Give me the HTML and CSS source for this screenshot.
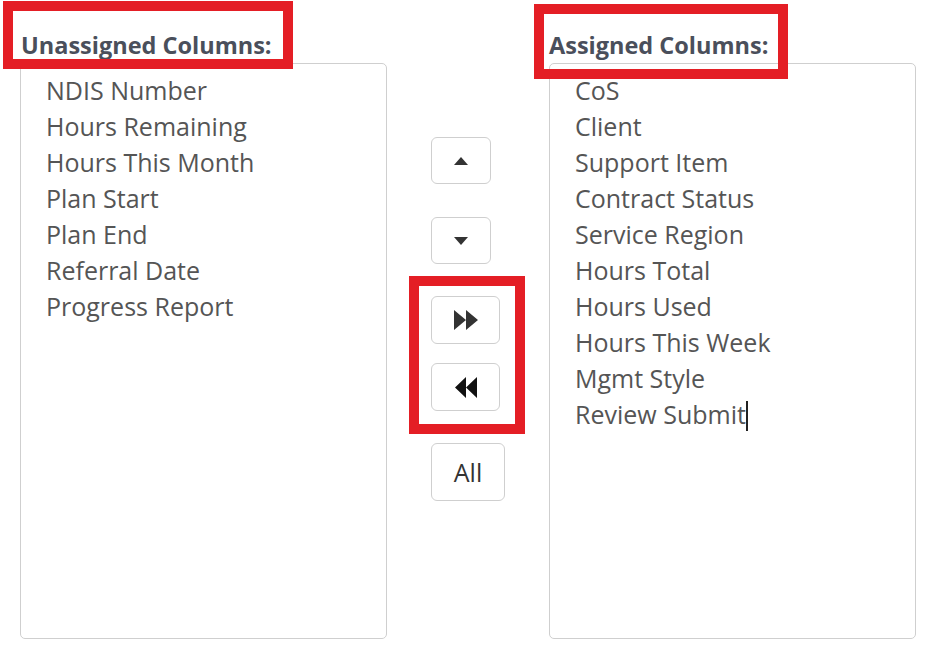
FILE: index.html
```html
<!DOCTYPE html>
<html lang="en">
<head>
    <meta charset="UTF-8">
    <title>Column Chooser</title>
    <link rel="stylesheet" href="styles.css">
</head>
<body>
    <div class="chooser">
        <div class="column-panel">
            <h2 class="panel-title">Unassigned Columns:</h2>
            <ul class="column-list">
                <li>NDIS Number</li>
                <li>Hours Remaining</li>
                <li>Hours This Month</li>
                <li>Plan Start</li>
                <li>Plan End</li>
                <li>Referral Date</li>
                <li>Progress Report</li>
            </ul>
        </div>

        <div class="actions">
            <button class="btn btn-up" title="Move up">
                <svg width="14" height="8" viewBox="0 0 14 8"><path d="M0 8 L7 0 L14 8 Z" fill="#333"/></svg>
            </button>
            <button class="btn btn-down" title="Move down">
                <svg width="14" height="8" viewBox="0 0 14 8"><path d="M0 0 L14 0 L7 8 Z" fill="#333"/></svg>
            </button>
            <button class="btn btn-move btn-assign" title="Assign">
                <svg width="24" height="20" viewBox="0 0 24 20"><path d="M0 0 L12 10 L0 20 Z M12 0 L24 10 L12 20 Z" fill="#333"/></svg>
            </button>
            <button class="btn btn-move btn-unassign" title="Unassign">
                <svg width="22" height="21" viewBox="0 0 22 21"><path d="M11 0 L0 10.5 L11 21 Z M22 0 L11 10.5 L22 21 Z" fill="#111"/></svg>
            </button>
            <button class="btn btn-all">All</button>
        </div>

        <div class="column-panel">
            <h2 class="panel-title assigned">Assigned Columns:</h2>
            <ul class="column-list">
                <li>CoS</li>
                <li>Client</li>
                <li>Support Item</li>
                <li>Contract Status</li>
                <li>Service Region</li>
                <li>Hours Total</li>
                <li>Hours Used</li>
                <li>Hours This Week</li>
                <li>Mgmt Style</li>
                <li>Review Submit<span class="cursor"></span></li>
            </ul>
        </div>
    </div>

    <!-- annotation boxes -->
    <div class="mark mark-left"></div>
    <div class="mark mark-right"></div>
    <div class="mark mark-middle"></div>
</body>
</html>
```

FILE: styles.css
```css
body {
    margin: 0;
    font-family: "Open Sans", "Noto Sans", sans-serif;
    background: #fff;
    position: relative;
}

.chooser {
    display: flex;
    padding: 30px 0 0 20px;
}

.column-panel {
    width: 367px;
}

.panel-title {
    margin: 0 0 3px 1px;
    font-size: 23.5px;
    line-height: 30px;
    font-weight: 700;
    color: #4a4f5b;
}

.panel-title.assigned {
    margin-left: 0;
}

.column-list {
    list-style: none;
    margin: 0;
    padding: 8px 0 0 25px;
    height: 566px;
    border: 1px solid #cfcfcf;
    border-radius: 5px;
    font-size: 25px;
    line-height: 36px;
    color: #555;
}

.cursor {
    display: inline-block;
    width: 2px;
    height: 30px;
    background: #222;
    vertical-align: -7px;
}

.actions {
    width: 162px;
    padding: 107px 0 0 44px;
    box-sizing: border-box;
    display: flex;
    flex-direction: column;
    align-items: flex-start;
}

.btn {
    display: flex;
    align-items: center;
    justify-content: center;
    background: #fff;
    border: 1px solid #cfcfcf;
    border-radius: 6px;
    padding: 0;
    font-family: inherit;
    cursor: pointer;
}

.btn-up,
.btn-down {
    width: 60px;
    height: 47px;
}

.btn-up {
    margin-bottom: 33px;
}

.btn-down {
    margin-bottom: 32px;
}

.btn-move {
    width: 69px;
    height: 48px;
}

.btn-assign {
    margin-bottom: 19px;
}

.btn-unassign {
    margin-bottom: 32px;
}

.btn-all {
    width: 74px;
    height: 58px;
    font-size: 25px;
    color: #333;
}

.mark {
    position: absolute;
    border: 10px solid #e41e25;
    box-sizing: border-box;
}

.mark-left {
    left: 3px;
    top: 1px;
    width: 290px;
    height: 68px;
}

.mark-right {
    left: 534px;
    top: 4px;
    width: 254px;
    height: 75px;
}

.mark-middle {
    left: 409px;
    top: 276px;
    width: 116px;
    height: 158px;
}
```
